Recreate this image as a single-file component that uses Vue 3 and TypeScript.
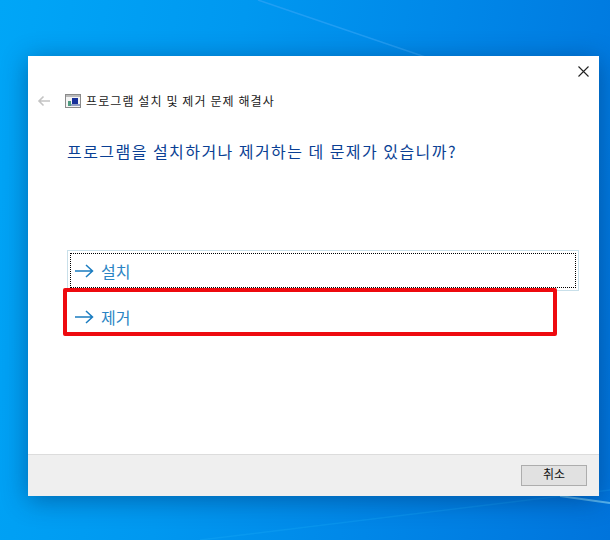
<script setup lang="ts">
interface Choice { label: string; focused: boolean }
const choices: Choice[] = [
  { label: '설치', focused: true },
  { label: '제거', focused: false },
]
</script>

<template>
  <div class="desktop">
    <svg class="streaks" viewBox="0 0 610 540" aria-hidden="true">
      <path d="M258 0 L440 62" stroke="#2ea3f5" stroke-width="1.5" fill="none" opacity=".7" />
      <path d="M200 540 L610 490" stroke="#25b4fb" stroke-width="1.5" fill="none" opacity=".22" />
      <path d="M560 496 L610 503" stroke="#6cc4f4" stroke-width="2" fill="none" opacity=".8" />
    </svg>
    <div class="window">
      <main class="content">
        <div class="close-row">
          <svg class="close" width="11" height="11" viewBox="0 0 11 11" aria-label="닫기">
            <path d="M.5 .5 L10.5 10.5 M10.5 .5 L.5 10.5" stroke="#222" stroke-width="1.1" fill="none" />
          </svg>
        </div>
        <div class="title-row">
          <svg class="back" width="14" height="12" viewBox="0 0 14 12" aria-label="뒤로">
            <path d="M13 6 H2 M6.5 1.5 L2 6 L6.5 10.5" stroke="#c4c4c4" stroke-width="1.6" fill="none" />
          </svg>
          <svg class="app-icon" width="16" height="14" viewBox="0 0 16 14" aria-hidden="true">
            <rect x=".5" y=".5" width="15" height="13" fill="#f4f4f4" stroke="#8a8a8a" />
            <rect x="1" y="1" width="14" height="2" fill="#b9b9b9" />
            <rect x="7" y="4" width="6" height="6" fill="#16309a" />
            <rect x="3" y="7" width="3" height="5" fill="#4e9a80" />
            <rect x="6" y="10" width="9" height="2" fill="#8f9cc4" />
          </svg>
          <span class="title">프로그램 설치 및 제거 문제 해결사</span>
        </div>
        <h1 class="question">프로그램을 설치하거나 제거하는 데 문제가 있습니까?</h1>
        <div class="choices">
          <button v-for="c in choices" :key="c.label" class="choice" :class="{ focused: c.focused }" type="button">
            <span class="choice-inner">
              <svg width="19" height="14" viewBox="0 0 19 14" aria-hidden="true">
                <path d="M0 7 H17.5 M11 1 L17.5 7 L11 13" stroke="#1a7cc0" stroke-width="1.5" fill="none" />
              </svg>
              <span class="choice-label">{{ c.label }}</span>
            </span>
          </button>
          <div class="highlight"></div>
        </div>
      </main>
      <footer class="footer">
        <button class="cancel" type="button">취소</button>
      </footer>
    </div>
  </div>
</template>

<style>
html, body { margin: 0; padding: 0; }
</style>

<style scoped>
.desktop {
  position: relative;
  width: 610px;
  height: 540px;
  overflow: hidden;
  box-sizing: border-box;
  padding: 56px 11px 44px 28px;
  background: linear-gradient(100deg, #00a6f7 0%, #0098f0 35%, #0087e8 65%, #0074dc 100%);
  font-family: "Noto Sans CJK KR", "Liberation Sans", sans-serif;
}
.streaks { position: absolute; inset: 0; width: 610px; height: 540px; }
.window {
  position: relative;
  display: flex;
  flex-direction: column;
  height: 440px;
  background: #fff;
  box-shadow: 0 4px 24px rgba(0, 40, 90, .45);
}
.content {
  flex: 1;
  display: flex;
  flex-direction: column;
  min-height: 0;
}
.close-row {
  display: flex;
  justify-content: flex-end;
  padding: 10px 10px 0 0;
  height: 11px;
}
.close { display: block; }
.title-row {
  display: flex;
  align-items: center;
  height: 18px;
  margin-top: 15px;
  padding-left: 9px;
}
.back { margin-right: 14px; }
.app-icon { margin-right: 5px; }
.title {
  font-size: 12px;
  line-height: 18px;
  color: #1a1a1a;
  letter-spacing: 1.1px;
  white-space: nowrap;
}
.question {
  margin: 29px 0 0 39px;
  font-size: 16px;
  line-height: 24px;
  font-weight: 400;
  color: #0a3f94;
  letter-spacing: 1.45px;
  white-space: nowrap;
}
.choices {
  position: relative;
  display: flex;
  flex-direction: column;
  margin: 87px 0 0 39px;
  width: 512px;
}
.choice {
  display: block;
  width: 512px;
  height: 41px;
  padding: 0;
  margin: 0 0 5px;
  background: #fff;
  border: 1px solid transparent;
  font: inherit;
  text-align: left;
}
.choice.focused { border-color: #c9e0ea; padding: 2px; }
.choice-inner {
  display: flex;
  align-items: center;
  gap: 7px;
  height: 100%;
  box-sizing: border-box;
  padding-left: 6px;
  border: 1px dotted transparent;
}
.choice.focused .choice-inner { border-color: #000; padding-left: 4px; }
.choice-label {
  font-size: 16px;
  line-height: 22px;
  color: #2a84c4;
}
.highlight {
  position: absolute;
  left: -4px;
  top: 38px;
  width: 494px;
  height: 48px;
  box-sizing: border-box;
  border: 4px solid #ee0a0f;
  border-radius: 2px;
  pointer-events: none;
}
.footer {
  display: flex;
  justify-content: flex-end;
  align-items: flex-start;
  box-sizing: border-box;
  height: 42px;
  padding: 10px 12px 0 0;
  background: #efefef;
  border-top: 1px solid #dcdcdc;
}
.cancel {
  width: 66px;
  height: 21px;
  padding: 0 0 4px;
  background: #e1e1e1;
  border: 1px solid #adadad;
  color: #111;
  font: inherit;
  font-size: 12px;
  line-height: 16px;
}
</style>
